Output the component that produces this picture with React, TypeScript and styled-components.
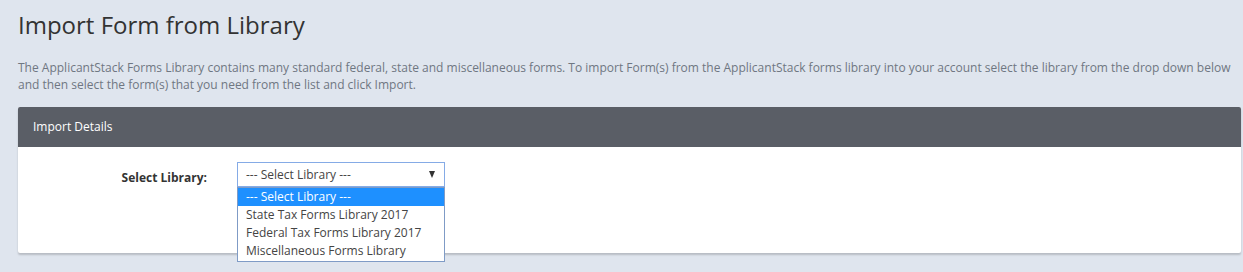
import * as React from 'react';
import styled, { createGlobalStyle } from 'styled-components';

const libraries = [
  '--- Select Library ---',
  'State Tax Forms Library 2017',
  'Federal Tax Forms Library 2017',
  'Miscellaneous Forms Library',
];

const GlobalStyle = createGlobalStyle`
  html, body {
    margin: 0;
    padding: 0;
    background: #dfe5ee;
    font-family: 'Open Sans', 'Liberation Sans', sans-serif;
    color: #333;
  }
`;

const App: React.FunctionComponent = () => (
  <Page>
    <GlobalStyle />
    <Title>Import Form from Library</Title>
    <Intro>
      The ApplicantStack Forms Library contains many standard federal, state and miscellaneous forms. To import
      Form(s) from the ApplicantStack forms library into your account select the library from the drop down below
      and then select the form(s) that you need from the list and click Import.
    </Intro>
    <Panel>
      <PanelHeader>Import Details</PanelHeader>
      <PanelBody>
        <FormRow>
          <Label>Select Library:</Label>
          <SelectWrap>
            <SelectBox>
              <span>{libraries[0]}</span>
              <Caret />
            </SelectBox>
            <OptionList>
              {libraries.map((lib, i) => (
                <OptionItem key={lib} selected={i === 0}>{lib}</OptionItem>
              ))}
            </OptionList>
          </SelectWrap>
        </FormRow>
      </PanelBody>
    </Panel>
  </Page>
);

export default App;

const Page = styled.div`
  padding: 0 2px 0 18px;
  min-height: 272px;
  box-sizing: border-box;
`;

const Title = styled.h1`
  margin: 0;
  padding-top: 8px;
  font-size: 24px;
  font-weight: 400;
  line-height: 34px;
  color: #333;
`;

const Intro = styled.p`
  margin: 17px 0 0;
  padding-right: 4px;
  font-size: 12px;
  line-height: 17px;
  color: #6f7782;
`;

const Panel = styled.div`
  margin-top: 14px;
  background: #fff;
  border-radius: 2px;
  box-shadow: 0 2px 2px rgba(0, 0, 0, 0.18);
`;

const PanelHeader = styled.div`
  height: 40px;
  line-height: 40px;
  padding: 0 15px;
  background: #5a5e66;
  color: #fff;
  font-size: 12px;
  border-radius: 2px 2px 0 0;
`;

const PanelBody = styled.div`
  height: 106px;
  padding-top: 15px;
  box-sizing: border-box;
`;

const FormRow = styled.div`
  display: grid;
  grid-template-columns: 219px 208px;
  align-items: center;
`;

const Label = styled.label`
  text-align: right;
  padding-right: 30px;
  padding-top: 6px;
  font-size: 12px;
  font-weight: 700;
  color: #333;
`;

const SelectWrap = styled.div`
  position: relative;
`;

const SelectBox = styled.div`
  height: 25px;
  box-sizing: border-box;
  border: 1px solid #85abe6;
  padding: 0 8px;
  display: flex;
  align-items: center;
  justify-content: space-between;
  font-size: 12px;
  color: #444;
  background: #fff;
`;

const Caret = styled.span`
  width: 0;
  height: 0;
  border-left: 3.5px solid transparent;
  border-right: 3.5px solid transparent;
  border-top: 7px solid #333;
  margin-right: 1px;
`;

const OptionList = styled.ul`
  position: absolute;
  top: 100%;
  left: 0;
  right: 0;
  margin: 0;
  padding: 0 0 1px;
  list-style: none;
  background: #fff;
  border: 1px solid #7f9bc6;
  z-index: 2;
`;

const OptionItem = styled.li<{ selected?: boolean }>`
  height: 18px;
  line-height: 18px;
  padding: 0 8px;
  font-size: 12px;
  color: ${p => (p.selected ? '#fff' : '#444')};
  background: ${p => (p.selected ? '#1e90ff' : 'transparent')};
  white-space: nowrap;
`;
